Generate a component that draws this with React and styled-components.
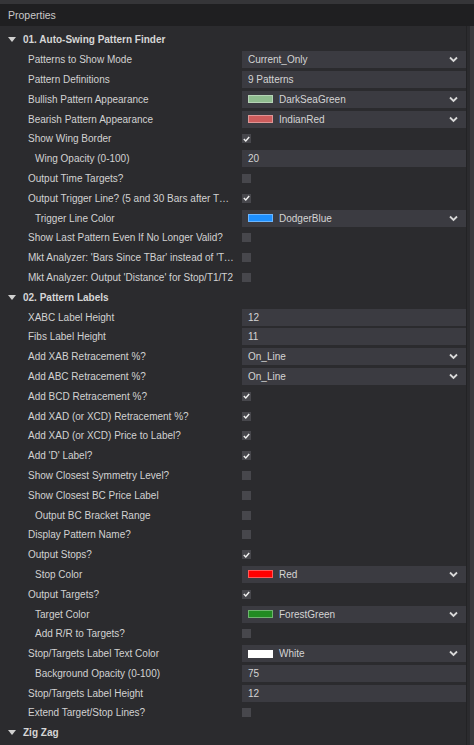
import styled, { createGlobalStyle } from "styled-components";

const GlobalStyle = createGlobalStyle`
  html, body {
    margin: 0;
    padding: 0;
    background: #2b2b2e;
  }
  * {
    box-sizing: border-box;
  }
`;

const Window = styled.div`
  width: 474px;
  height: 745px;
  overflow: hidden;
  display: flex;
  flex-direction: column;
  background: #2b2b2e;
  font-family: "Liberation Sans", Arial, sans-serif;
  font-size: 10px;
  color: #d2d2d2;
  border-top: 4px solid #353538;
`;

const Header = styled.div`
  height: 22px;
  flex: none;
  display: flex;
  align-items: center;
  padding-left: 8px;
  background: #1f1f21;
  color: #c9c9c9;
  font-size: 10.5px;
`;

const Body = styled.div`
  flex: 1;
  display: flex;
  min-height: 0;
`;

const List = styled.div`
  flex: 1;
  padding-top: 4px;
`;

const Scrollbar = styled.div`
  width: 8px;
  flex: none;
  background: #2b2b2e;
  border-left: 1px solid #232325;
  display: flex;
  justify-content: flex-end;
`;

const Thumb = styled.div`
  width: 4px;
  height: 100%;
  background: #3a3a3d;
`;

const SectionRow = styled.div`
  height: 19.8px;
  display: flex;
  align-items: center;
  padding-left: 8px;
  gap: 7px;
  font-weight: bold;
  font-size: 10px;
  color: #d6d6d6;
`;

const Arrow = styled.span`
  width: 0;
  height: 0;
  border-left: 4px solid transparent;
  border-right: 4px solid transparent;
  border-top: 5px solid #d0d0d0;
`;

const Row = styled.div`
  height: 19.8px;
  display: grid;
  grid-template-columns: 242px 224px;
  align-items: center;
`;

const Label = styled.div`
  padding-left: ${(p) => (p.$indent ? 35 : 28)}px;
  white-space: nowrap;
  overflow: hidden;
  text-overflow: ellipsis;
  padding-right: 8px;
  color: #d2d2d2;
`;

const Box = styled.div`
  height: 17px;
  background: #3b3b41;
  display: flex;
  align-items: center;
  padding: 0 6px;
  gap: 6px;
  color: #d4d4d4;
`;

const BoxText = styled.span`
  flex: 1;
`;

const Swatch = styled.span`
  width: 25px;
  height: 8px;
  background: ${(p) => p.$color};
  border: 1px solid rgba(255, 255, 255, 0.35);
  flex: none;
`;

const Chevron = styled.svg`
  width: 9px;
  height: 7px;
  flex: none;
  margin-right: 2px;
`;

const Check = styled.div`
  width: 9px;
  height: 9px;
  background: #47474c;
  display: flex;
  align-items: center;
  justify-content: center;
`;

function Down() {
  return (
    <Chevron viewBox="0 0 9 7">
      <path d="M1 1.5 L4.5 5 L8 1.5" fill="none" stroke="#d8d8d8" strokeWidth="1.8" />
    </Chevron>
  );
}

function Field({ row }) {
  if (row.check !== undefined) {
    return (
      <div>
        <Check>
          {row.check && (
            <svg width="7" height="6" viewBox="0 0 7 6">
              <path d="M0.8 3 L2.8 5 L6.2 1" fill="none" stroke="#f0f0f0" strokeWidth="1.4" />
            </svg>
          )}
        </Check>
      </div>
    );
  }
  return (
    <Box>
      {row.swatch && <Swatch $color={row.swatch} />}
      <BoxText>{row.value}</BoxText>
      {row.select && <Down />}
    </Box>
  );
}

const sections = [
  {
    title: "01. Auto-Swing Pattern Finder",
    rows: [
      { label: "Patterns to Show Mode", value: "Current_Only", select: true },
      { label: "Pattern Definitions", value: "9 Patterns" },
      { label: "Bullish Pattern Appearance", value: "DarkSeaGreen", swatch: "#8fbc8f", select: true },
      { label: "Bearish Pattern Appearance", value: "IndianRed", swatch: "#cd5c5c", select: true },
      { label: "Show Wing Border", check: true },
      { label: "Wing Opacity (0-100)", value: "20", indent: true },
      { label: "Output Time Targets?", check: false },
      { label: "Output Trigger Line? (5 and 30 Bars after TBar)", check: true },
      { label: "Trigger Line Color", value: "DodgerBlue", swatch: "#1e90ff", select: true, indent: true },
      { label: "Show Last Pattern Even If No Longer Valid?", check: false },
      { label: "Mkt Analyzer: 'Bars Since TBar' instead of 'Time'", check: false },
      { label: "Mkt Analyzer: Output 'Distance' for Stop/T1/T2", check: false },
    ],
  },
  {
    title: "02. Pattern Labels",
    rows: [
      { label: "XABC Label Height", value: "12" },
      { label: "Fibs Label Height", value: "11" },
      { label: "Add XAB Retracement %?", value: "On_Line", select: true },
      { label: "Add ABC Retracement %?", value: "On_Line", select: true },
      { label: "Add BCD Retracement %?", check: true },
      { label: "Add XAD (or XCD) Retracement %?", check: true },
      { label: "Add XAD (or XCD) Price to Label?", check: true },
      { label: "Add 'D' Label?", check: true },
      { label: "Show Closest Symmetry Level?", check: false },
      { label: "Show Closest BC Price Label", check: false },
      { label: "Output BC Bracket Range", check: false, indent: true },
      { label: "Display Pattern Name?", check: false },
      { label: "Output Stops?", check: true },
      { label: "Stop Color", value: "Red", swatch: "#ff0000", select: true, indent: true },
      { label: "Output Targets?", check: true },
      { label: "Target Color", value: "ForestGreen", swatch: "#228b22", select: true, indent: true },
      { label: "Add R/R to Targets?", check: false, indent: true },
      { label: "Stop/Targets Label Text Color", value: "White", swatch: "#ffffff", select: true },
      { label: "Background Opacity (0-100)", value: "75", indent: true },
      { label: "Stop/Targets Label Height", value: "12" },
      { label: "Extend Target/Stop Lines?", check: false },
    ],
  },
  { title: "Zig Zag", rows: [] },
];

export default function App() {
  return (
    <>
      <GlobalStyle />
      <Window>
        <Header>Properties</Header>
        <Body>
          <List>
            {sections.map((s) => (
              <div key={s.title}>
                <SectionRow>
                  <Arrow />
                  {s.title}
                </SectionRow>
                {s.rows.map((r) => (
                  <Row key={r.label}>
                    <Label $indent={r.indent}>{r.label}</Label>
                    <Field row={r} />
                  </Row>
                ))}
              </div>
            ))}
          </List>
          <Scrollbar>
            <Thumb />
          </Scrollbar>
        </Body>
      </Window>
    </>
  );
}
